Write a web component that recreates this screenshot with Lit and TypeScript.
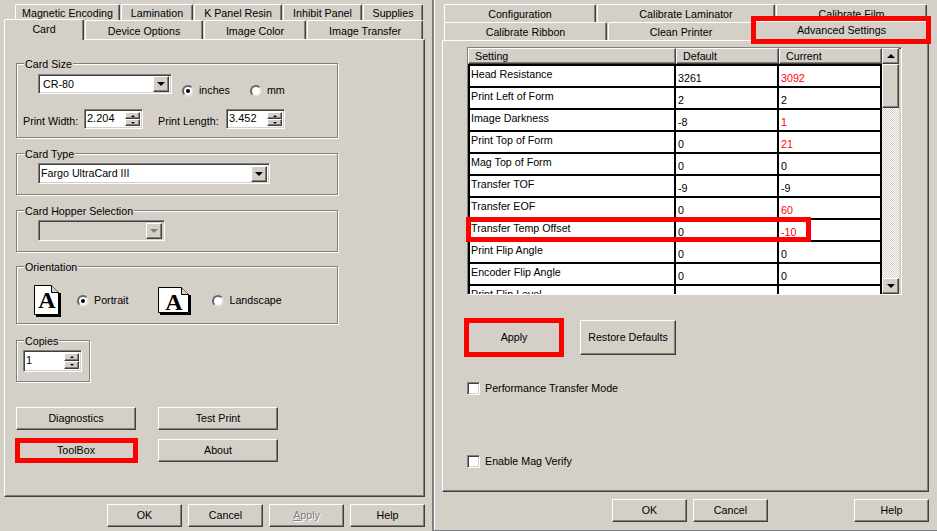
import { LitElement, html, css } from "lit";
import { customElement } from "lit/decorators.js";

type Tab = { t: string; w: number; sel?: boolean };

const leftRow1: Tab[] = [
  { t: "Magnetic Encoding", w: 105 },
  { t: "Lamination", w: 72 },
  { t: "K Panel Resin", w: 88 },
  { t: "Inhibit Panel", w: 79 },
  { t: "Supplies", w: 60 },
];
const leftRow2: Tab[] = [
  { t: "Card", w: 80, sel: true },
  { t: "Device Options", w: 118 },
  { t: "Image Color", w: 102 },
  { t: "Image Transfer", w: 116 },
];
const rightRow1: Tab[] = [
  { t: "Configuration", w: 152 },
  { t: "Calibrate Laminator", w: 178 },
  { t: "Calibrate Film", w: 151 },
];
const rightRow2: Tab[] = [
  { t: "Calibrate Ribbon", w: 163 },
  { t: "Clean Printer", w: 146 },
  { t: "Advanced Settings", w: 173, sel: true },
];
const rows: [string, string, string, boolean][] = [
  ["Head Resistance", "3261", "3092", true],
  ["Print Left of Form", "2", "2", false],
  ["Image Darkness", "-8", "1", true],
  ["Print Top of Form", "0", "21", true],
  ["Mag Top of Form", "0", "0", false],
  ["Transfer TOF", "-9", "-9", false],
  ["Transfer EOF", "0", "60", true],
  ["Transfer Temp Offset", "0", "-10", true],
  ["Print Flip Angle", "0", "0", false],
  ["Encoder Flip Angle", "0", "0", false],
  ["Print Flip Level", "-", "-", false],
];

@customElement("app-root")
export class AppRoot extends LitElement {
  static styles = css`
    :host {
      display: block;
      width: 937px;
      height: 531px;
      background: #d4d0c8;
      font-family: "Liberation Sans", Arial, sans-serif;
      font-size: 10.7px;
      line-height: 13px;
      color: #000;
      overflow: hidden;
    }
    * { box-sizing: border-box; }
    .root { position: relative; display: flex; width: 937px; height: 531px; }

    .dlg-l { width: 432px; padding: 4px 0 0 4px; }
    .dlg-r {
      width: 505px;
      padding: 4px 0 0 8px;
      border-left: 2px solid #808080;
      border-bottom: 1px solid #808080;
      box-shadow: inset 1px 0 0 #fff;
    }

    .tabrow { display: flex; }
    .l1 { height: 16px; margin-left: 11px; }
    .l2 { height: 19px; }
    .r1 { height: 18px; margin-left: 2px; }
    .r2 { height: 18px; margin-left: 2px; }

    .tab {
      flex: none;
      display: flex;
      align-items: center;
      justify-content: center;
      padding-top: 2px;
      background: #d4d0c8;
      border-top: 1px solid #fff;
      border-left: 1px solid #fff;
      border-right: 1px solid #404040;
      border-radius: 2px 2px 0 0;
      box-shadow: inset -1px 0 0 #808080;
      white-space: nowrap;
      overflow: hidden;
      margin-right: 1px;
    }
    .tab.sel {
      position: relative;
      z-index: 1;
      margin-top: -1px;
      margin-bottom: -1px;
      padding-top: 0;
      padding-bottom: 2px;
    }

    .panel {
      border-top: 1px solid #fff;
      border-left: 1px solid #fff;
      border-right: 1px solid #404040;
      border-bottom: 1px solid #404040;
      box-shadow: inset -1px -1px 0 #808080;
    }
    .panel-l { width: 421px; height: 458px; padding: 23px 0 0 11px; }
    .panel-r { width: 487px; height: 452px; padding: 6px 0 0 24px; }

    .group {
      position: relative;
      width: 322px;
      border: 1px solid #808080;
      box-shadow: 1px 1px 0 #fff, inset 1px 1px 0 #fff;
    }
    .legend {
      position: absolute;
      left: 7px;
      top: -6px;
      padding: 0 1px;
      background: #d4d0c8;
    }
    .g-size { height: 75px; margin-bottom: 15px; padding-top: 10px; }
    .g-type { height: 42px; margin-bottom: 15px; padding-top: 9px; }
    .g-hop { height: 42px; margin-bottom: 14px; padding-top: 9px; }
    .g-ori { height: 58px; margin-bottom: 16px; }
    .g-cop { height: 42px; width: 74px; margin-bottom: 25px; padding: 9px 0 0 6px; }

    .sunk {
      border: 1px solid;
      border-color: #808080 #fff #fff #808080;
      box-shadow: inset 1px 1px 0 #404040, inset -1px -1px 0 #d4d0c8;
    }
    .raised {
      background: #d4d0c8;
      border: 1px solid;
      border-color: #fff #404040 #404040 #fff;
      box-shadow: inset -1px -1px 0 #808080;
    }

    .select {
      display: flex;
      align-items: center;
      justify-content: space-between;
      margin-left: 21px;
      padding: 2px;
      background: #fff;
    }
    .s-size { width: 134px; height: 20px; padding-left: 4px; }
    .s-type { width: 232px; height: 21px; }
    .s-hop { width: 127px; height: 21px; background: #d4d0c8; justify-content: flex-end; }
    .dd {
      flex: none;
      width: 16px;
      height: 16px;
      display: flex;
      align-items: center;
      justify-content: center;
    }
    .down, .up {
      width: 0;
      height: 0;
      border-left: 4px solid transparent;
      border-right: 4px solid transparent;
    }
    .down { border-top: 4px solid #000; }
    .up { border-bottom: 4px solid #000; }
    .off { border-top-color: #808080; }
    .tiny { border-left-width: 2px; border-right-width: 2px; border-top-width: 2px; border-bottom-width: 2px; }

    .line1 { display: flex; height: 20px; }
    .line1 .radio-item { margin-top: 10px; height: 13px; }
    .radio-item { display: flex; align-items: center; }
    .ri-in { margin-left: 10px; }
    .ri-mm { margin-left: 20px; }
    .radio {
      flex: none;
      width: 12px;
      height: 12px;
      margin-right: 5px;
      border-radius: 50%;
      background: #fff;
      border: 2px solid;
      border-color: #666 #ddd #ddd #666;
      display: flex;
      align-items: center;
      justify-content: center;
    }
    .dot { width: 4px; height: 4px; border-radius: 50%; background: #000; }

    .line2 { display: flex; align-items: center; margin-top: 15px; padding-left: 6px; }
    .lab-w { width: 61px; padding-top: 4px; }
    .lab-l { width: 68px; margin-left: 15px; padding-top: 4px; }
    .spin {
      flex: none;
      width: 59px;
      height: 20px;
      background: #fff;
      padding: 2px 2px 2px 1px;
      display: flex;
      align-items: center;
      justify-content: space-between;
    }
    .spin-h { height: 22px; }
    .spin-val { font-size: 11px; padding: 0 0 2px 1px; }
    .spin-btns { flex: none; width: 15px; height: 100%; display: flex; flex-direction: column; }
    .spin-btns .raised {
      flex: 1;
      display: flex;
      align-items: center;
      justify-content: center;
    }

    .ori { display: flex; align-items: center; height: 100%; padding-top: 11px; }
    .ori svg { flex: none; display: block; }
    .ic-p { margin-left: 17px; }
    .ic-l { margin-left: 30px; }
    .ori .r-p { margin-left: 16px; }
    .ori .r-l { margin-left: 21px; }

    .btn {
      display: flex;
      align-items: center;
      justify-content: center;
      width: 120px;
      height: 23px;
    }
    .btnrow { display: flex; gap: 22px; margin-bottom: 9px; }

    .footer { display: flex; gap: 6px; margin-top: 7px; }
    .f-l { width: 421px; justify-content: flex-end; }
    .f-r { width: 487px; justify-content: flex-end; }
    .fbtn { width: 75px; height: 23px; }
    .f-spacer { flex: none; width: 74px; }
    .disabled { color: #808080; text-shadow: 1px 1px 0 #fff; }

    .tbl {
      width: 435px;
      height: 248px;
      display: flex;
      overflow: hidden;
      background: #d4d0c8;
    }
    .grid { flex: none; width: 414px; overflow: hidden; }
    .cols { display: grid; grid-template-columns: 208px 103px 103px; }
    .hdr { height: 16px; }
    .hc {
      display: flex;
      align-items: center;
      padding: 1px 0 0 6px;
    }
    .body { border-top: 2px solid #000; background: #000; }
    .row { height: 22px; border-bottom: 2px solid #000; }
    .cell {
      background: #fff;
      border-right: 2px solid #000;
      height: 20px;
      overflow: visible;
      white-space: nowrap;
    }
    .c-name { border-left: 2px solid #000; padding: 2px 0 0 1px; }
    .c-val { padding: 6px 0 0 2px; }
    .red { color: #f00; }

    .sb { flex: none; width: 17px; display: flex; flex-direction: column; }
    .sb-btn { flex: none; height: 16px; display: flex; align-items: center; justify-content: center; }
    .sb-thumb { flex: none; height: 44px; }
    .sb-track {
      flex: 1;
      background: repeating-conic-gradient(#fff 0 25%, #d4d0c8 0 50%) 0 0 / 2px 2px;
    }

    .actions { display: flex; gap: 18px; margin: 25px 0 0 -1px; }
    .a-btn { width: 96px; height: 35px; display: flex; align-items: center; justify-content: center; }

    .check { display: flex; align-items: center; height: 13px; }
    .check i {
      flex: none;
      display: block;
      width: 13px;
      height: 13px;
      margin-right: 5px;
      background: #fff;
    }
    .c1 { margin-top: 27px; }
    .c2 { margin-top: 60px; }

    .hl { position: absolute; border: 5px solid #f00; pointer-events: none; z-index: 5; }
    .hl-tool { left: 15px; top: 438px; width: 123px; height: 25px; }
    .hl-adv { left: 751px; top: 16px; width: 180px; height: 28px; }
    .hl-row { left: 466px; top: 217px; width: 345px; height: 25px; }
    .hl-apply { left: 464px; top: 318px; width: 100px; height: 39px; }
  `;

  private tabs(list: Tab[]) {
    return list.map(
      (x) => html`<div class="tab ${x.sel ? "sel" : ""}" style="width:${x.w}px">${x.t}</div>`
    );
  }

  private spin(val: string, tall = false) {
    return html`<div class="spin sunk ${tall ? "spin-h" : ""}">
      <span class="spin-val">${val}</span>
      <div class="spin-btns">
        <div class="raised"><div class="up tiny"></div></div>
        <div class="raised"><div class="down tiny"></div></div>
      </div>
    </div>`;
  }

  private dd(off = false) {
    return html`<div class="dd raised"><div class="down ${off ? "off" : ""}"></div></div>`;
  }

  private radio(on: boolean) {
    return html`<div class="radio">${on ? html`<div class="dot"></div>` : ""}</div>`;
  }

  private page(w: number, h: number, ax: number, ay: number, size: number) {
    return html`<svg width=${w} height=${h} viewBox="0 0 ${w} ${h}">
      <path d="M2 ${h - 1}H${w - 1}V8" fill="none" stroke="#000" stroke-width="2" />
      <path
        d="M.5 .5H${w - 9.5}L${w - 2.5} 7.5V${h - 2.5}H.5Z"
        fill="#fff"
        stroke="#000"
      />
      <path d="M${w - 9.5} .5V7.5H${w - 2.5}" fill="#d4d0c8" stroke="#000" />
      <text
        x=${ax}
        y=${ay}
        text-anchor="middle"
        font-family="Liberation Serif, serif"
        font-weight="700"
        font-size=${size}
        fill="#000"
      >A</text>
    </svg>`;
  }

  render() {
    return html`<div class="root">
      <section class="dlg-l">
        <div class="tabrow l1">${this.tabs(leftRow1)}</div>
        <div class="tabrow l2">${this.tabs(leftRow2)}</div>
        <div class="panel panel-l">
          <div class="group g-size">
            <span class="legend">Card Size</span>
            <div class="line1">
              <div class="select sunk s-size"><span>CR-80</span>${this.dd()}</div>
              <div class="radio-item ri-in">${this.radio(true)}<span>inches</span></div>
              <div class="radio-item ri-mm">${this.radio(false)}<span>mm</span></div>
            </div>
            <div class="line2">
              <span class="lab-w">Print Width:</span>${this.spin("2.204")}
              <span class="lab-l">Print Length:</span>${this.spin("3.452")}
            </div>
          </div>
          <div class="group g-type">
            <span class="legend">Card Type</span>
            <div class="select sunk s-type"><span>Fargo UltraCard III</span>${this.dd()}</div>
          </div>
          <div class="group g-hop">
            <span class="legend">Card Hopper Selection</span>
            <div class="select sunk s-hop">${this.dd(true)}</div>
          </div>
          <div class="group g-ori">
            <span class="legend">Orientation</span>
            <div class="ori">
              <div class="ic-p">${this.page(27, 32, 13, 23, 24)}</div>
              <div class="radio-item r-p">${this.radio(true)}<span>Portrait</span></div>
              <div class="ic-l">${this.page(33, 28, 16, 23, 24)}</div>
              <div class="radio-item r-l">${this.radio(false)}<span>Landscape</span></div>
            </div>
          </div>
          <div class="group g-cop">
            <span class="legend">Copies</span>
            ${this.spin("1", true)}
          </div>
          <div class="btnrow">
            <div class="btn raised">Diagnostics</div>
            <div class="btn raised">Test Print</div>
          </div>
          <div class="btnrow">
            <div class="btn raised">ToolBox</div>
            <div class="btn raised">About</div>
          </div>
        </div>
        <div class="footer f-l">
          <div class="btn fbtn raised">OK</div>
          <div class="btn fbtn raised">Cancel</div>
          <div class="btn fbtn raised disabled"><span><u>A</u>pply</span></div>
          <div class="btn fbtn raised">Help</div>
        </div>
      </section>

      <section class="dlg-r">
        <div class="tabrow r1">${this.tabs(rightRow1)}</div>
        <div class="tabrow r2">${this.tabs(rightRow2)}</div>
        <div class="panel panel-r">
          <div class="tbl sunk">
            <div class="grid">
              <div class="cols hdr">
                <div class="hc raised">Setting</div>
                <div class="hc raised">Default</div>
                <div class="hc raised">Current</div>
              </div>
              <div class="body">
                ${rows.map(
                  (r) => html`<div class="cols row">
                    <div class="cell c-name">${r[0]}</div>
                    <div class="cell c-val">${r[1]}</div>
                    <div class="cell c-val ${r[3] ? "red" : ""}">${r[2]}</div>
                  </div>`
                )}
              </div>
            </div>
            <div class="sb">
              <div class="sb-btn raised"><div class="up"></div></div>
              <div class="sb-thumb raised"></div>
              <div class="sb-track"></div>
              <div class="sb-btn raised"><div class="down"></div></div>
            </div>
          </div>
          <div class="actions">
            <div class="a-btn raised">Apply</div>
            <div class="a-btn raised">Restore Defaults</div>
          </div>
          <div class="check c1"><i class="sunk"></i><span>Performance Transfer Mode</span></div>
          <div class="check c2"><i class="sunk"></i><span>Enable Mag Verify</span></div>
        </div>
        <div class="footer f-r">
          <div class="btn fbtn raised">OK</div>
          <div class="btn fbtn raised">Cancel</div>
          <div class="f-spacer"></div>
          <div class="btn fbtn raised">Help</div>
        </div>
      </section>

      <div class="hl hl-tool"></div>
      <div class="hl hl-adv"></div>
      <div class="hl hl-row"></div>
      <div class="hl hl-apply"></div>
    </div>`;
  }
}
